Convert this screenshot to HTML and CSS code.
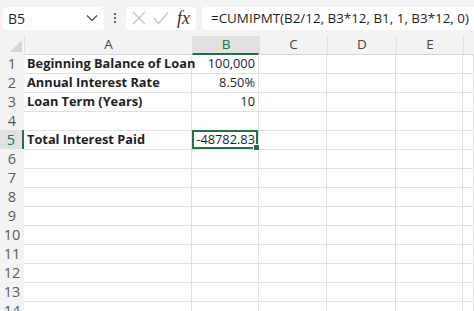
FILE: index.html
```html
<!DOCTYPE html>
<html lang="en">
<head>
    <meta charset="UTF-8">
    <title>Book1 - CUMIPMT</title>
    <link rel="stylesheet" href="styles.css">
</head>
<body>
    <!-- barra de fórmulas -->
    <div class="toolbar">
        <div class="namebox">
            <span>B5</span>
            <svg class="chev" width="12" height="8" viewBox="0 0 12 8"><path d="M1 1.5 L6 6.5 L11 1.5" fill="none" stroke="#555" stroke-width="1.3"/></svg>
        </div>
        <div class="grip"><i></i><i></i><i></i></div>
        <div class="fxbox">
            <svg width="14" height="14" viewBox="0 0 14 14"><path d="M1 1 L13 13 M13 1 L1 13" stroke="#c4c4c4" stroke-width="1.2"/></svg>
            <svg width="16" height="14" viewBox="0 0 16 14"><path d="M1 7 L5.5 12.5 L15 1.5" fill="none" stroke="#c4c4c4" stroke-width="1.2"/></svg>
            <span class="fx">fx</span>
        </div>
        <div class="formula">=CUMIPMT(B2/12, B3*12, B1, 1, B3*12, 0)</div>
    </div>

    <!-- hoja -->
    <div class="sheet">
        <div class="row head">
            <div class="corner"><svg width="12" height="12" viewBox="0 0 12 12"><path d="M12 0 L12 12 L0 12 Z" fill="#d4d4d4"/></svg></div>
            <div class="col">A</div>
            <div class="col active">B</div>
            <div class="col">C</div>
            <div class="col">D</div>
            <div class="col">E</div>
            <div class="col"></div>
        </div>
        <div class="row">
            <div class="num">1</div>
            <div class="cell bold">Beginning Balance of Loan</div>
            <div class="cell right">100,000</div>
            <div class="cell"></div><div class="cell"></div><div class="cell"></div><div class="cell"></div>
        </div>
        <div class="row">
            <div class="num">2</div>
            <div class="cell bold">Annual Interest Rate</div>
            <div class="cell right">8.50%</div>
            <div class="cell"></div><div class="cell"></div><div class="cell"></div><div class="cell"></div>
        </div>
        <div class="row">
            <div class="num">3</div>
            <div class="cell bold">Loan Term (Years)</div>
            <div class="cell right">10</div>
            <div class="cell"></div><div class="cell"></div><div class="cell"></div><div class="cell"></div>
        </div>
        <div class="row">
            <div class="num">4</div>
            <div class="cell"></div><div class="cell"></div>
            <div class="cell"></div><div class="cell"></div><div class="cell"></div><div class="cell"></div>
        </div>
        <div class="row">
            <div class="num active">5</div>
            <div class="cell bold">Total Interest Paid</div>
            <div class="cell right selected">-48782.83<span class="handle"></span></div>
            <div class="cell"></div><div class="cell"></div><div class="cell"></div><div class="cell"></div>
        </div>
        <div class="row"><div class="num">6</div><div class="cell"></div><div class="cell"></div><div class="cell"></div><div class="cell"></div><div class="cell"></div><div class="cell"></div></div>
        <div class="row"><div class="num">7</div><div class="cell"></div><div class="cell"></div><div class="cell"></div><div class="cell"></div><div class="cell"></div><div class="cell"></div></div>
        <div class="row"><div class="num">8</div><div class="cell"></div><div class="cell"></div><div class="cell"></div><div class="cell"></div><div class="cell"></div><div class="cell"></div></div>
        <div class="row"><div class="num">9</div><div class="cell"></div><div class="cell"></div><div class="cell"></div><div class="cell"></div><div class="cell"></div><div class="cell"></div></div>
        <div class="row"><div class="num">10</div><div class="cell"></div><div class="cell"></div><div class="cell"></div><div class="cell"></div><div class="cell"></div><div class="cell"></div></div>
        <div class="row"><div class="num">11</div><div class="cell"></div><div class="cell"></div><div class="cell"></div><div class="cell"></div><div class="cell"></div><div class="cell"></div></div>
        <div class="row"><div class="num">12</div><div class="cell"></div><div class="cell"></div><div class="cell"></div><div class="cell"></div><div class="cell"></div><div class="cell"></div></div>
        <div class="row"><div class="num">13</div><div class="cell"></div><div class="cell"></div><div class="cell"></div><div class="cell"></div><div class="cell"></div><div class="cell"></div></div>
        <div class="row"><div class="num">14</div><div class="cell"></div><div class="cell"></div><div class="cell"></div><div class="cell"></div><div class="cell"></div><div class="cell"></div></div>
    </div>
</body>
</html>
```

FILE: styles.css
```css
body {
    margin: 0;
    font-family: "Open Sans", Arial, sans-serif;
    font-size: 12.8px;
    color: #1f1f1f;
    background: #fff;
    overflow: hidden;
}
.toolbar {
    display: flex;
    align-items: center;
    height: 36px;
    padding-left: 3px;
    background: #f3f3f3;
    box-sizing: border-box;
}
.namebox, .fxbox, .formula {
    height: 23px;
    background: #fff;
    border-radius: 4px;
    display: flex;
    align-items: center;
    box-sizing: border-box;
}
.namebox {
    width: 101px;
    padding: 0 6px 0 5px;
    justify-content: space-between;
    font-size: 14px;
}
.grip {
    width: 22px;
    display: flex;
    flex-direction: column;
    align-items: center;
    gap: 2px;
}
.grip i {
    width: 2px;
    height: 2px;
    background: #666;
}
.fxbox {
    width: 70px;
    padding: 0 6px 0 6px;
    gap: 7px;
}
.fx {
    font-family: "Liberation Serif", serif;
    font-style: italic;
    font-size: 18px;
    color: #333;
    margin-left: auto;
}
.formula {
    flex: 1;
    margin-left: 6px;
    padding-left: 9px;
    font-size: 13.4px;
    white-space: nowrap;
    overflow: hidden;
    border-radius: 4px 0 0 4px;
}
.sheet {
    display: flex;
    flex-direction: column;
}
.row {
    display: grid;
    grid-template-columns: 24px 168px 67px 68px 69px 67px 1fr;
    height: 19px;
    flex-shrink: 0;
}
.row.head {
    height: 18px;
    background: #f3f3f3;
}
.corner {
    display: flex;
    align-items: flex-end;
    justify-content: flex-end;
    padding: 0 2px 2px 0;
    border-bottom: 1px solid #d6d6d6;
}
.col {
    text-align: center;
    color: #444;
    font-size: 13.5px;
    line-height: 17px;
    border-left: 1px solid #e1e1e1;
    border-bottom: 1px solid #d6d6d6;
}
.col.active {
    background: #e1e1e1;
    color: #217346;
    border-bottom: 2px solid #217346;
}
.num {
    background: #f3f3f3;
    color: #5a5a5a;
    text-align: center;
    line-height: 19px;
    font-size: 14.5px;
    border-bottom: 1px solid #e6e6e6;
}
.num.active {
    background: #e1e1e1;
    color: #217346;
    border-right: 2px solid #217346;
}
.cell {
    border-right: 1px solid #e1e1e1;
    border-bottom: 1px solid #e1e1e1;
    line-height: 19px;
    padding: 0 3px;
    white-space: nowrap;
    overflow: visible;
}
.bold {
    font-weight: bold;
}
.right {
    text-align: right;
}
.selected {
    position: relative;
    box-shadow: inset 0 0 0 2px #217346;
}
.handle {
    position: absolute;
    right: -2px;
    bottom: -2px;
    width: 5px;
    height: 5px;
    background: #217346;
    border: 1px solid #fff;
}
```
